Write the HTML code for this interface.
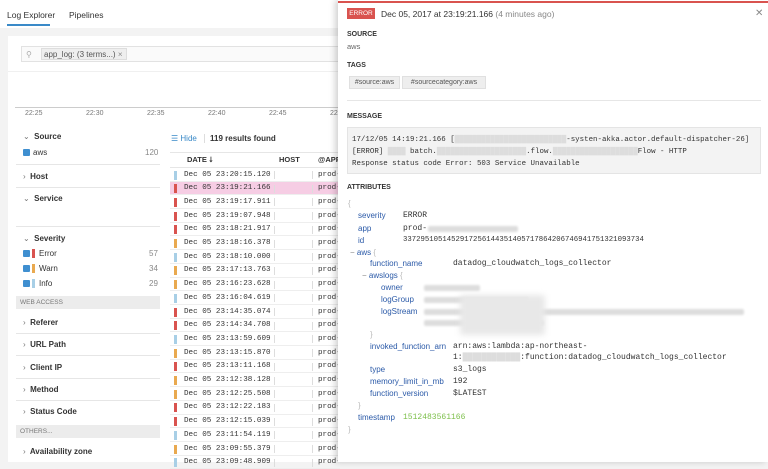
<!DOCTYPE html>
<html><head><meta charset="utf-8"><style>
*{margin:0;padding:0;box-sizing:border-box}
body{width:768px;height:462px;overflow:hidden;background:#f3f3f3;font-family:"Liberation Sans",sans-serif;color:#333;position:relative}
.a{position:absolute;white-space:nowrap}
.m{font-family:"Liberation Mono",monospace}
.b{font-weight:bold}
.s{font-size:8px}
.hd{font-size:8px;font-weight:bold;color:#333}
.div{position:absolute;height:1px;background:#e6e6e6}
.chk{position:absolute;width:7px;height:7px;background:#3f8fd0;border-radius:1px}
.bar{position:absolute;width:3px;height:9px}
.er{background:#d9534f}.wa{background:#e9a94f}.in{background:#a8cfe6}
.blur{position:absolute;height:6px;background:#ddd;border-radius:2px;filter:blur(1px)}
.k{color:#2b5aa8}
</style></head><body>
<div class="a" style="left:0;top:0;width:768px;height:28px;background:#fff"></div>
<div class="a s" style="left:7px;top:10px;font-size:8.5px">Log Explorer</div>
<div class="a s" style="left:69px;top:10px;font-size:8.5px">Pipelines</div>
<div class="a" style="left:7px;top:24px;width:43px;height:2px;background:#3a8ac8"></div>
<div class="a" style="left:8px;top:36px;width:340px;height:426px;background:#fff"></div>
<div class="a" style="left:21px;top:46px;width:330px;height:16px;border:1px solid #e2e2e2;background:#fafafa"></div>
<div class="a" style="left:26px;top:50px;font-size:8px;color:#aaa">&#9906;</div>
<div class="a" style="left:41px;top:48px;width:86px;height:12px;background:#eee;border:1px solid #ddd;font-size:8px;color:#555;padding:1px 2px">app_log: (3 terms...) <span style="color:#888">×</span></div>
<div class="div" style="left:8px;top:71px;width:330px;background:#f0f0f0"></div>
<div class="a" style="left:15px;top:107px;width:323px;height:1px;background:#ccc"></div>
<div class="a" style="left:25px;top:110px;font-size:7px;color:#777">22:25</div>
<div class="a" style="left:86px;top:110px;font-size:7px;color:#777">22:30</div>
<div class="a" style="left:147px;top:110px;font-size:7px;color:#777">22:35</div>
<div class="a" style="left:208px;top:110px;font-size:7px;color:#777">22:40</div>
<div class="a" style="left:269px;top:110px;font-size:7px;color:#777">22:45</div>
<div class="a" style="left:330px;top:110px;font-size:7px;color:#777">22:</div>

<div class="a hd" style="left:23px;top:132px"><span style="color:#777;font-weight:normal">⌄</span>&nbsp; Source</div>
<div class="chk" style="left:23px;top:149px"></div>
<div class="a s" style="left:33px;top:148px">aws</div>
<div class="a s" style="left:145px;top:148px;color:#888">120</div>
<div class="div" style="left:16px;top:164px;width:144px"></div>
<div class="a hd" style="left:23px;top:172px"><span style="color:#777;font-weight:normal">›</span>&nbsp; Host</div>
<div class="div" style="left:16px;top:187px;width:144px"></div>
<div class="a hd" style="left:23px;top:194px"><span style="color:#777;font-weight:normal">⌄</span>&nbsp; Service</div>
<div class="div" style="left:16px;top:226px;width:144px"></div>
<div class="a hd" style="left:23px;top:234px"><span style="color:#777;font-weight:normal">⌄</span>&nbsp; Severity</div>
<div class="chk" style="left:23px;top:250px"></div><div class="bar er" style="left:32px;top:249px"></div><div class="a s" style="left:39px;top:249px">Error</div><div class="a s" style="left:149px;top:249px;color:#888">57</div>
<div class="chk" style="left:23px;top:265px"></div><div class="bar wa" style="left:32px;top:264px"></div><div class="a s" style="left:39px;top:264px">Warn</div><div class="a s" style="left:149px;top:264px;color:#888">34</div>
<div class="chk" style="left:23px;top:280px"></div><div class="bar in" style="left:32px;top:279px"></div><div class="a s" style="left:39px;top:279px">Info</div><div class="a s" style="left:149px;top:279px;color:#888">29</div>
<div class="a" style="left:16px;top:296px;width:144px;height:13px;background:#ececec;font-size:6.5px;color:#777;padding:3px 4px">WEB ACCESS</div>
<div class="a hd" style="left:23px;top:318px"><span style="color:#777;font-weight:normal">›</span>&nbsp; Referer</div>
<div class="div" style="left:16px;top:333px;width:144px"></div>
<div class="a hd" style="left:23px;top:340px"><span style="color:#777;font-weight:normal">›</span>&nbsp; URL Path</div>
<div class="div" style="left:16px;top:355px;width:144px"></div>
<div class="a hd" style="left:23px;top:363px"><span style="color:#777;font-weight:normal">›</span>&nbsp; Client IP</div>
<div class="div" style="left:16px;top:378px;width:144px"></div>
<div class="a hd" style="left:23px;top:385px"><span style="color:#777;font-weight:normal">›</span>&nbsp; Method</div>
<div class="div" style="left:16px;top:400px;width:144px"></div>
<div class="a hd" style="left:23px;top:407px"><span style="color:#777;font-weight:normal">›</span>&nbsp; Status Code</div>
<div class="a" style="left:16px;top:425px;width:144px;height:13px;background:#ececec;font-size:6.5px;color:#777;padding:3px 4px">OTHERS...</div>
<div class="a hd" style="left:23px;top:447px"><span style="color:#777;font-weight:normal">›</span>&nbsp; Availability zone</div>

<div class="a s" style="left:171px;top:134px;color:#3a8ac8">☰ Hide</div>
<div class="a" style="left:204px;top:134px;width:1px;height:9px;background:#ddd"></div>
<div class="a hd" style="left:210px;top:134px">119 results found</div>
<div class="a" style="left:170px;top:152px;width:170px;height:16px;border-top:1px solid #e6e6e6;border-bottom:1px solid #e6e6e6"></div>
<div class="a hd" style="left:187px;top:155px;font-size:7.5px">DATE ⭣</div>
<div class="a hd" style="left:279px;top:155px;font-size:7.5px">HOST</div>
<div class="a hd" style="left:318px;top:155px;font-size:7.5px">@APP</div>
<div id="rows"></div>
<script>
var r=[["20:15.120","in"],["19:21.166","er"],["19:17.911","er"],["19:07.948","er"],["18:21.917","er"],["18:16.378","wa"],["18:10.000","in"],["17:13.763","wa"],["16:23.628","wa"],["16:04.619","in"],["14:35.074","er"],["14:34.708","er"],["13:59.609","in"],["13:15.870","wa"],["13:11.168","er"],["12:38.128","wa"],["12:25.508","wa"],["12:22.183","er"],["12:15.039","er"],["11:54.119","in"],["09:55.379","wa"],["09:48.909","in"]];
var h="";r.forEach(function(x,i){var t=168+i*13.7;
h+='<div class="a" style="left:170px;top:'+t+'px;width:170px;height:13.7px;border-bottom:1px solid #eee;'+(i==1?'background:#f6cde4;':'')+'"></div>';
h+='<div class="bar '+x[1]+'" style="left:174px;top:'+(t+2.5)+'px"></div>';
h+='<div class="a m" style="left:184px;top:'+(t+2.5)+'px;font-size:7.6px">Dec 05 23:'+x[0]+'</div>';
h+='<div class="a" style="left:274px;top:'+(t+3)+'px;width:1px;height:8px;background:#ddd"></div><div class="a" style="left:312px;top:'+(t+3)+'px;width:1px;height:8px;background:#ddd"></div>';
h+='<div class="a m" style="left:318px;top:'+(t+2.5)+'px;font-size:7.6px">prod-</div>';});
document.getElementById("rows").innerHTML=h;
</script>

<div class="a" style="left:338px;top:0;width:430px;height:462px;background:#fff;box-shadow:-3px 0 6px rgba(0,0,0,.18)"></div>
<div class="a" style="left:338px;top:1px;width:430px;height:2px;background:#d9534f"></div>
<div class="a" style="left:347px;top:8px;width:28px;height:11px;background:#d9534f;color:#fff;font-size:6.5px;line-height:11px;text-align:center">ERROR</div>
<div class="a" style="left:381px;top:9px;font-size:8.5px">Dec 05, 2017 at 23:19:21.166 <span style="color:#888">(4 minutes ago)</span></div>
<div class="a" style="left:755px;top:8px;font-size:10px;color:#888">✕</div>
<div class="a hd" style="left:347px;top:31px;font-size:7px">SOURCE</div>
<div class="a" style="left:347px;top:42px;font-size:7.5px;color:#666">aws</div>
<div class="a hd" style="left:347px;top:62px;font-size:7px">TAGS</div>
<div class="a" style="left:349px;top:76px;width:51px;height:13px;background:#eee;border:1px solid #e0e0e0;font-size:7px;color:#555;line-height:11px;text-align:center">#source:aws</div>
<div class="a" style="left:402px;top:76px;width:84px;height:13px;background:#eee;border:1px solid #e0e0e0;font-size:7px;color:#555;line-height:11px;text-align:center">#sourcecategory:aws</div>
<div class="div" style="left:347px;top:100px;width:414px"></div>
<div class="a hd" style="left:347px;top:113px;font-size:7px">MESSAGE</div>
<div class="a" style="left:347px;top:127px;width:414px;height:47px;background:#f3f3f3;border:1px solid #e4e4e4"></div>
<div class="a m" style="left:352px;top:134px;font-size:7.45px;line-height:12px">17/12/05 14:19:21.166 [<span style="color:#ddd">█████████████████████████</span>-systen-akka.actor.default-dispatcher-26]<br>[ERROR] <span style="color:#ddd">████</span> batch.<span style="color:#ddd">████████████████████</span>.flow.<span style="color:#ddd">███████████████████</span>Flow - HTTP<br>Response status code Error: 503 Service Unavailable</div>
<div class="a hd" style="left:347px;top:184px;font-size:7px">ATTRIBUTES</div>
<div class="a s" style="left:348px;top:199px;color:#bbb">{</div>
<div class="a s k" style="left:358px;top:211px">severity</div><div class="a m s" style="left:403px;top:211px">ERROR</div>
<div class="a s k" style="left:358px;top:224px">app</div><div class="a m s" style="left:403px;top:224px">prod-</div><div class="blur" style="left:428px;top:226px;width:90px"></div>
<div class="a s k" style="left:358px;top:236px">id</div><div class="a m s" style="left:403px;top:236px;font-size:7.3px">3372951051452917256144351405717864206746941751321093734</div>
<div class="a s k" style="left:350px;top:248px"><span style="color:#888">−</span> aws <span style="color:#bbb">{</span></div>
<div class="a s k" style="left:370px;top:259px">function_name</div><div class="a m s" style="left:453px;top:259px">datadog_cloudwatch_logs_collector</div>
<div class="a s k" style="left:362px;top:271px"><span style="color:#888">−</span> awslogs <span style="color:#bbb">{</span></div>
<div class="a s k" style="left:381px;top:283px">owner</div><div class="blur" style="left:424px;top:285px;width:56px"></div>
<div class="a s k" style="left:381px;top:295px">logGroup</div><div class="blur" style="left:424px;top:297px;width:105px"></div>
<div class="a s k" style="left:381px;top:307px">logStream</div><div class="blur" style="left:424px;top:309px;width:320px"></div>
<div class="blur" style="left:424px;top:320px;width:120px"></div>
<div class="blur" style="left:460px;top:295px;width:85px;height:40px;background:#e8e8e8;filter:blur(3px)"></div>
<div class="a s" style="left:370px;top:330px;color:#bbb">}</div>
<div class="a s k" style="left:370px;top:342px">invoked_function_arn</div><div class="a m s" style="left:453px;top:342px">arn:aws:lambda:ap-northeast-</div>
<div class="a m s" style="left:453px;top:353px">1:<span style="color:#ddd">████████████</span>:function:datadog_cloudwatch_logs_collector</div>
<div class="a s k" style="left:370px;top:365px">type</div><div class="a m s" style="left:453px;top:365px">s3_logs</div>
<div class="a s k" style="left:370px;top:377px">memory_limit_in_mb</div><div class="a m s" style="left:453px;top:377px">192</div>
<div class="a s k" style="left:370px;top:389px">function_version</div><div class="a m s" style="left:453px;top:389px">$LATEST</div>
<div class="a s" style="left:358px;top:401px;color:#bbb">}</div>
<div class="a s k" style="left:358px;top:413px">timestamp</div><div class="a m s" style="left:403px;top:413px;color:#7cbf4a">1512483561166</div>
<div class="a s" style="left:348px;top:425px;color:#bbb">}</div>
</body></html>
